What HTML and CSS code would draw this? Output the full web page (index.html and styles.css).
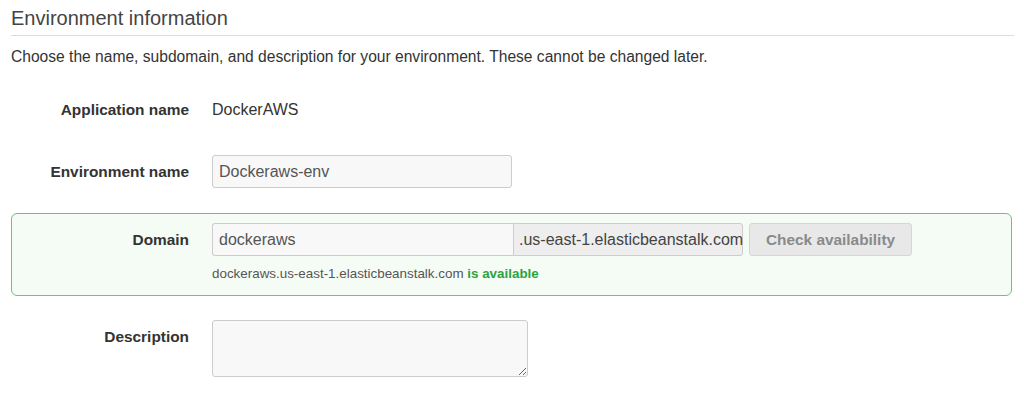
FILE: index.html
```html
<!DOCTYPE html>
<html>
<head>
<meta charset="utf-8">
<link rel="stylesheet" href="styles.css">
</head>
<body>
<div class="page">
  <h2 class="title">Environment information</h2>
  <p class="intro">Choose the name, subdomain, and description for your environment. These cannot be changed later.</p>

  <div class="row row-app">
    <div class="label">Application name</div>
    <div class="value static">DockerAWS</div>
  </div>

  <div class="row row-env">
    <div class="label">Environment name</div>
    <div class="value"><input class="field env" type="text" value="Dockeraws-env"></div>
  </div>

  <div class="success-box">
    <div class="row">
      <div class="label">Domain</div>
      <div class="value">
        <div class="domain-group">
          <input class="field domain" type="text" value="dockeraws">
          <span class="addon">.us-east-1.elasticbeanstalk.com</span>
          <button class="check" type="button">Check availability</button>
        </div>
        <div class="help">dockeraws.us-east-1.elasticbeanstalk.com <strong class="ok">is available</strong></div>
      </div>
    </div>
  </div>

  <div class="row row-desc">
    <div class="label">Description</div>
    <div class="value"><textarea class="field desc"></textarea></div>
  </div>
</div>
</body>
</html>
```

FILE: styles.css
```css
html, body {
  margin: 0;
  padding: 0;
  background: #ffffff;
}

body {
  font-family: "Liberation Sans", Arial, sans-serif;
  color: #333333;
}

.page {
  padding: 0 10px 0 11px;
}

.title {
  margin: 6px 0 0 0;
  padding-bottom: 5px;
  font-size: 20px;
  line-height: 24px;
  font-weight: normal;
  color: #444444;
  border-bottom: 1px solid #dddddd;
}

.intro {
  margin: 11px 0 0 0;
  font-size: 15.6px;
  line-height: 20px;
  color: #333333;
}

.row {
  display: grid;
  grid-template-columns: 178px 1fr;
  column-gap: 23px;
  align-items: start;
}

.row-app { margin-top: 26px; }
.row-env { margin-top: 29px; }
.row-desc { margin-top: 24px; }

.label {
  text-align: right;
  font-weight: bold;
  font-size: 15.4px;
  line-height: 33px;
  color: #333333;
}

.value.static {
  font-size: 16px;
  line-height: 33px;
  color: #333333;
}

.field {
  box-sizing: border-box;
  height: 33px;
  margin: 0;
  padding: 0 6px;
  font-family: "Liberation Sans", Arial, sans-serif;
  font-size: 16px;
  color: #555555;
  background: #f8f8f8;
  border: 1px solid #cccccc;
  border-radius: 3px;
  outline: none;
  display: block;
}

.env { width: 300px; }

.success-box {
  margin-top: 25px;
  width: 1001px;
  box-sizing: border-box;
  border: 1px solid #6cc47c;
  border-radius: 6px;
  background: #f5fcf6;
  padding: 9px 0 12px 0;
}

.success-box .row {
  grid-template-columns: 177px 1fr;
}

.domain-group {
  display: flex;
  align-items: stretch;
}

.domain {
  width: 301px;
  border-radius: 3px 0 0 3px;
  border-right: none;
}

.addon {
  box-sizing: border-box;
  width: 230px;
  height: 33px;
  line-height: 31px;
  padding: 0 3px 0 5px;
  font-size: 16px;
  color: #444444;
  background: #eeeeee;
  border: 1px solid #cccccc;
  border-radius: 0 3px 3px 0;
  white-space: nowrap;
}

.check {
  box-sizing: border-box;
  margin-left: 6px;
  width: 163px;
  height: 33px;
  font-family: "Liberation Sans", Arial, sans-serif;
  font-size: 15.4px;
  font-weight: bold;
  color: #8a8a8a;
  background: #e8e8e8;
  border: 1px solid #d6d6d6;
  border-radius: 3px;
  padding: 0;
}

.help {
  margin-top: 9px;
  font-size: 13.4px;
  line-height: 18px;
  color: #555555;
}

.ok {
  color: #2ba33d;
}

.desc {
  width: 316px;
  height: 57px;
  resize: vertical;
  background: #f8f8f8;
}
```
